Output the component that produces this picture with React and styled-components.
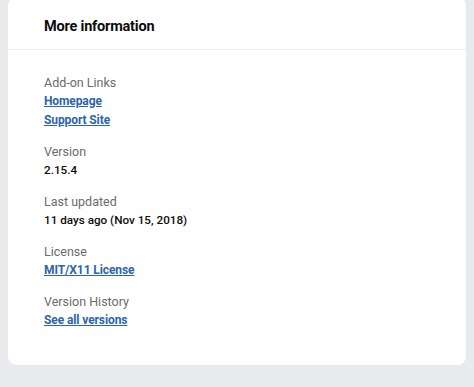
import styled, { createGlobalStyle } from 'styled-components';

const GlobalStyle = createGlobalStyle`
  html, body {
    margin: 0;
    padding: 0;
    background: #e8eaed;
  }
  body {
    font-family: Roboto, "Open Sans", "Liberation Sans", sans-serif;
  }
`;

const Page = styled.div`
  padding: 0 8px;
  height: 387px;
  box-sizing: border-box;
`;

const Card = styled.section`
  margin-top: -3px;
  background: #fff;
  border-radius: 8px;
  height: 368px;
  box-shadow: 0 0 1px rgba(0, 0, 0, 0.08);
`;

const Header = styled.header`
  height: 53px;
  box-sizing: border-box;
  padding: 20px 36px 0;
  border-bottom: 1px solid #ededf0;
  h2 {
    margin: 0;
    font-size: 14.5px;
    line-height: 20px;
    font-weight: 700;
    color: #0c0c0d;
    letter-spacing: -0.2px;
  }
`;

const Body = styled.dl`
  margin: 0;
  padding: 23px 36px 0;
  display: flex;
  flex-direction: column;
  gap: 12px;
`;

const Group = styled.div`
  display: flex;
  flex-direction: column;
`;

const Term = styled.dt`
  font-size: 12.5px;
  line-height: 19px;
  color: #6b6b6e;
`;

const Value = styled.dd`
  margin: 0;
  font-size: 11.7px;
  font-weight: 500;
  line-height: 19px;
  color: #0c0c0d;
`;

const Link = styled.a`
  font-size: 12px;
  font-weight: 700;
  line-height: 19px;
  color: #2c64b0;
  text-decoration: underline;
  letter-spacing: -0.1px;
`;

const groups = [
  { term: 'Add-on Links', links: ['Homepage', 'Support Site'] },
  { term: 'Version', value: '2.15.4' },
  { term: 'Last updated', value: '11 days ago (Nov 15, 2018)' },
  { term: 'License', links: ['MIT/X11 License'] },
  { term: 'Version History', links: ['See all versions'] },
];

export default function App() {
  return (
    <>
      <GlobalStyle />
      <Page>
        <Card>
          <Header>
            <h2>More information</h2>
          </Header>
          <Body>
            {groups.map((g) => (
              <Group key={g.term}>
                <Term>{g.term}</Term>
                {g.value && <Value>{g.value}</Value>}
                {g.links &&
                  g.links.map((l) => (
                    <Value key={l}>
                      <Link href="#">{l}</Link>
                    </Value>
                  ))}
              </Group>
            ))}
          </Body>
        </Card>
      </Page>
    </>
  );
}
